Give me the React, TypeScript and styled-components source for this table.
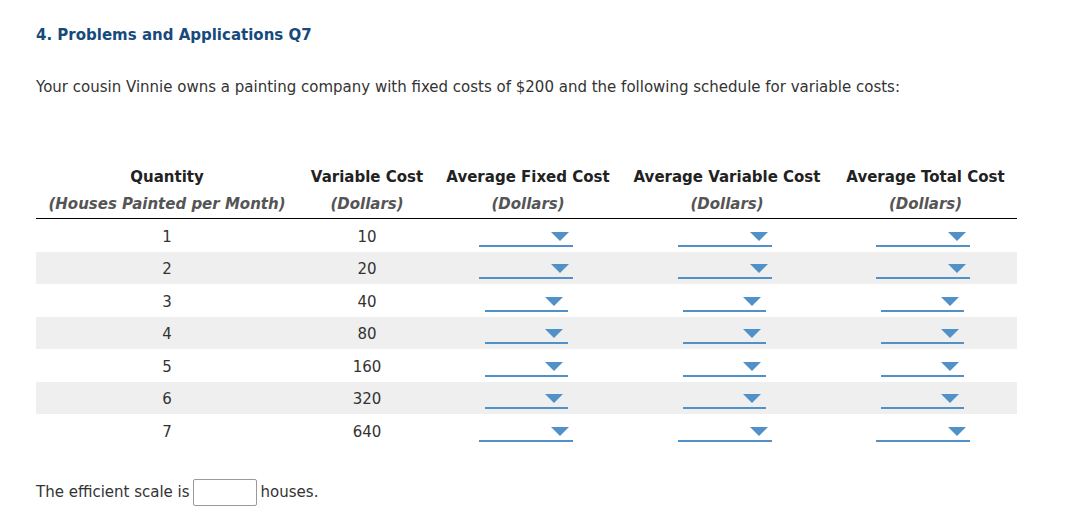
import React from "react";
import styled, { createGlobalStyle } from "styled-components";

const Global = createGlobalStyle`
  html, body { margin: 0; padding: 0; background: #ffffff; }
  body { font-family: "DejaVu Sans", Verdana, sans-serif; color: #333333; }
`;

const Page = styled.div`
  padding: 25px 52px 0 36px;
  width: 1069px;
  box-sizing: border-box;
`;

const Heading = styled.h2`
  margin: 0;
  font-size: 15px;
  font-weight: bold;
  color: #174a7c;
  line-height: 20px;
`;

const Intro = styled.p`
  margin: 32px 0 0;
  font-size: 15px;
  line-height: 20px;
  color: #333333;
`;

const Table = styled.div`
  margin-top: 66px;
  display: grid;
  grid-template-columns: 262px 138px 184px 214px 183px;
  width: 981px;
`;

const HeadCell = styled.div`
  text-align: center;
  font-size: 15px;
  line-height: 27px;
  padding-top: 1px;
  border-bottom: 1px solid #000000;
`;

const HeadTitle = styled.div`
  font-weight: bold;
  color: #222222;
`;

const HeadUnit = styled.div`
  font-style: italic;
  font-weight: bold;
  color: #555555;
`;

const Row = styled.div<{ $shade: boolean }>`
  display: contents;
  & > div {
    background: ${(p) => (p.$shade ? "#efefef" : "#ffffff")};
  }
`;

const NumCell = styled.div`
  height: 32.5px;
  display: flex;
  align-items: center;
  justify-content: center;
  padding-top: 3px;
  box-sizing: border-box;
  font-size: 15px;
  color: #333333;
`;

const DropCell = styled.div`
  height: 32.5px;
  display: flex;
  align-items: flex-end;
  padding-bottom: 5px;
  box-sizing: border-box;
`;

const Select = styled.div<{ $left: number; $wide: boolean }>`
  margin-left: ${(p) => p.$left}px;
  width: ${(p) => (p.$wide ? 94 : 83)}px;
  height: 20px;
  flex: none;
  display: flex;
  justify-content: flex-end;
  align-items: center;
  padding-right: ${(p) => (p.$wide ? 4 : 5)}px;
  padding-top: 1px;
  box-sizing: border-box;
  border-bottom: 2px solid #5191c7;
`;

const Caret = styled.span`
  width: 0;
  height: 0;
  border-left: 9px solid transparent;
  border-right: 9px solid transparent;
  border-top: 9px solid #5191c7;
`;

const Footer = styled.div`
  margin-top: 32px;
  display: flex;
  align-items: center;
  font-size: 15px;
  color: #333333;
`;

const Field = styled.input`
  width: 64px;
  height: 27px;
  box-sizing: border-box;
  border: 1px solid #9a9a9a;
  border-radius: 2px;
  margin: 0 4px 0 3px;
  padding: 0;
  font: inherit;
`;

const quantities = [1, 2, 3, 4, 5, 6, 7];
const costs = [10, 20, 40, 80, 160, 320, 640];
const offsets = [
  [43, 58, 42],
  [49, 63, 47],
];

export default function App() {
  return (
    <Page>
      <Global />
      <Heading>4. Problems and Applications Q7</Heading>
      <Intro>
        Your cousin Vinnie owns a painting company with fixed costs of $200 and the following schedule for variable
        costs:
      </Intro>
      <Table>
        <HeadCell>
          <HeadTitle>Quantity</HeadTitle>
          <HeadUnit>(Houses Painted per Month)</HeadUnit>
        </HeadCell>
        <HeadCell>
          <HeadTitle>Variable Cost</HeadTitle>
          <HeadUnit>(Dollars)</HeadUnit>
        </HeadCell>
        <HeadCell>
          <HeadTitle>Average Fixed Cost</HeadTitle>
          <HeadUnit>(Dollars)</HeadUnit>
        </HeadCell>
        <HeadCell>
          <HeadTitle>Average Variable Cost</HeadTitle>
          <HeadUnit>(Dollars)</HeadUnit>
        </HeadCell>
        <HeadCell>
          <HeadTitle>Average Total Cost</HeadTitle>
          <HeadUnit>(Dollars)</HeadUnit>
        </HeadCell>
        {quantities.map((q, i) => {
          const wide = i < 2 || i === 6;
          const off = wide ? offsets[0] : offsets[1];
          return (
            <Row key={q} $shade={i % 2 === 1}>
              <NumCell>{q}</NumCell>
              <NumCell>{costs[i]}</NumCell>
              {off.map((o, j) => (
                <DropCell key={j}>
                  <Select $left={o} $wide={wide}>
                    <Caret />
                  </Select>
                </DropCell>
              ))}
            </Row>
          );
        })}
      </Table>
      <Footer>
        <span>The efficient scale is</span>
        <Field type="text" />
        <span>houses.</span>
      </Footer>
    </Page>
  );
}
